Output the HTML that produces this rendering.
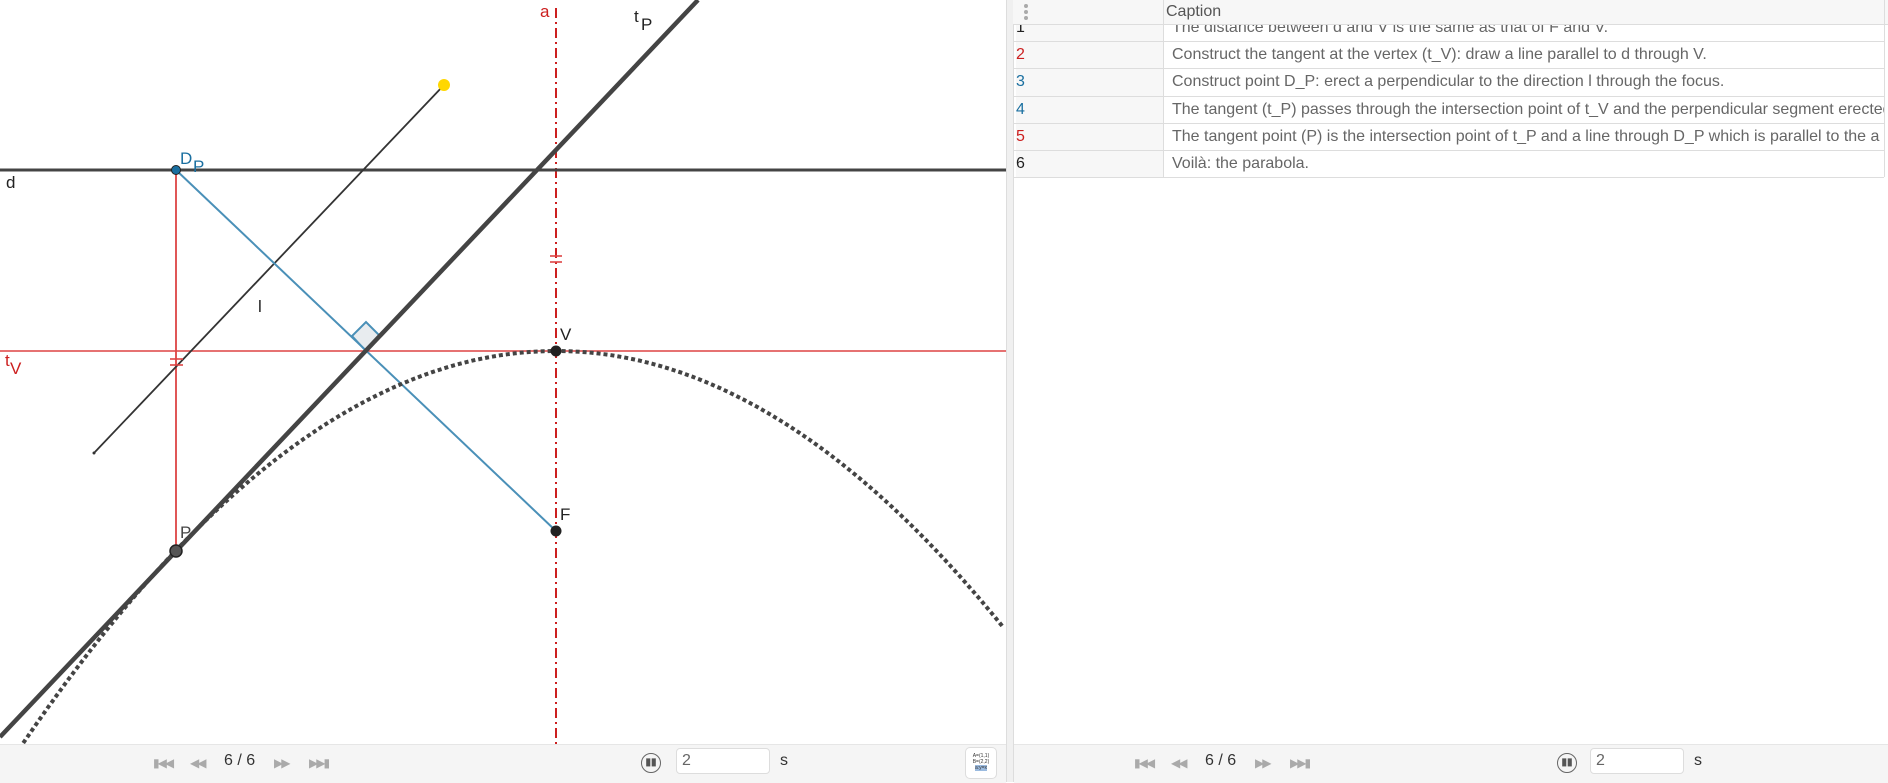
<!DOCTYPE html>
<html><head><meta charset="utf-8"><style>
body{margin:0;width:1888px;height:782px;overflow:hidden;background:#fff;font-family:"Liberation Sans",sans-serif;position:relative}
.abs{position:absolute}
.bar{position:absolute;top:744px;height:38px;background:#f5f5f5;border-top:1px solid #e6e6e6}
.ctl{position:absolute;top:756px;font-size:12px;color:#aaa;letter-spacing:-2px}
.inp{position:absolute;top:748px;width:94px;height:26px;border:1px solid #ddd;border-radius:4px;background:#fff;font-size:16px;color:#666;box-sizing:border-box;padding:3px 5px}
.row{position:absolute;left:1013px;width:871px;border-bottom:1px solid #ddd;overflow:hidden;font-size:16px;color:#666}
.row .n{position:absolute;left:3px;width:148px;height:100%;background:#f7f7f7;border-right:1px solid #ddd;box-sizing:border-box}
.row .n span{position:absolute;left:0}
.row .t{position:absolute;left:159px;white-space:nowrap}
</style></head><body>
<svg class="abs" style="left:0;top:0" width="1006" height="744">
<line x1="556" y1="8" x2="556" y2="744" stroke="#cc1f1f" stroke-width="2" stroke-dasharray="10,4,2,4"/>
<line x1="0" y1="170" x2="1006" y2="170" stroke="#444" stroke-width="3"/>
<line x1="0" y1="351" x2="1006" y2="351" stroke="#d44" stroke-width="1.6"/>
<line x1="176" y1="170" x2="176" y2="551" stroke="#d44" stroke-width="1.8"/>
<line x1="94" y1="453" x2="444" y2="85" stroke="#333" stroke-width="1.8"/>
<circle cx="94" cy="453" r="1.5" fill="#333"/>
<circle cx="444" cy="85" r="6" fill="#ffd700"/>
<polygon points="366,351 352,336 366,322 380,336" fill="#e8ecef" stroke="#4a90b8" stroke-width="2"/>
<line x1="176" y1="170" x2="556" y2="531" stroke="#4a90b8" stroke-width="2"/>
<line x1="0" y1="737" x2="698" y2="0" stroke="#444" stroke-width="4.5"/>
<path id="par" d="" fill="none" stroke="#444" stroke-width="4" stroke-dasharray="4,3"/>
<line x1="550" y1="256" x2="562" y2="256" stroke="#d44" stroke-width="1.6"/><line x1="550" y1="262" x2="562" y2="262" stroke="#d44" stroke-width="1.6"/>
<line x1="170" y1="359" x2="183" y2="359" stroke="#d44" stroke-width="1.6"/><line x1="170" y1="365" x2="183" y2="365" stroke="#d44" stroke-width="1.6"/>
<circle cx="176" cy="170" r="4.5" fill="#1a6fa0" stroke="#222" stroke-width="1"/>
<circle cx="556" cy="351" r="5.5" fill="#222"/>
<circle cx="556" cy="531" r="5.5" fill="#222"/>
<circle cx="176" cy="551" r="6" fill="#555" stroke="#222" stroke-width="1.5"/>
<g font-family="Liberation Sans,sans-serif" font-size="17">
<text x="540" y="17" fill="#cc1f1f">a</text>
<text x="634" y="22" fill="#222">t</text><text x="641" y="30" fill="#222">P</text>
<text x="6" y="188" fill="#222">d</text>
<text x="180" y="164" fill="#1a6fa0">D</text><text x="193" y="172" fill="#1a6fa0">P</text>
<text x="258" y="312" fill="#222">l</text>
<text x="5" y="366" fill="#cc1f1f">t</text><text x="10" y="374" fill="#cc1f1f">V</text>
<text x="560" y="340" fill="#222">V</text>
<text x="560" y="520" fill="#222">F</text>
<text x="180" y="538" fill="#444">P</text>
</g>
</svg>
<script>
var d="";for(var x=0;x<=1006;x+=4){var y=351+(x-556)*(x-556)/724;d+=(x?"L":"M")+x+","+y.toFixed(1);}document.getElementById("par").setAttribute("d",d);
</script>
<div class="abs" style="left:1006px;top:0;width:8px;height:782px;background:#f0f0f0;border-left:1px solid #ddd;border-right:1px solid #ddd;box-sizing:border-box"></div>
<div class="abs" style="left:1013px;top:0;width:875px;height:24px;background:#f7f7f7;border-bottom:1px solid #ddd"></div>
<div class="abs" style="left:1024px;top:4px;width:4px;height:16px;border-left:4px dotted #aaa"></div>
<div class="abs" style="left:1163px;top:0;height:24px;border-left:1px solid #ddd"></div>
<div class="abs" style="left:1166px;top:3px;font-size:16px;color:#555">Caption</div>
<div class="abs" style="left:1884px;top:0;height:177px;border-left:1px solid #ddd"></div>
<div class="row" style="top:25px;height:16px"><div class="n"><span style="top:-6px;color:#222">1</span></div><div class="t" style="top:-6px">The distance between d and V is the same as that of F and V.</div></div>
<div class="row" style="top:42px;height:26px"><div class="n"><span style="top:4px;color:#cc1f1f">2</span></div><div class="t" style="top:4px">Construct the tangent at the vertex (t_V): draw a line parallel to d through V.</div></div>
<div class="row" style="top:69px;height:27px"><div class="n"><span style="top:4px;color:#1a6fa0">3</span></div><div class="t" style="top:4px">Construct point D_P: erect a perpendicular to the direction l through the focus.</div></div>
<div class="row" style="top:97px;height:26px"><div class="n"><span style="top:4px;color:#1a6fa0">4</span></div><div class="t" style="top:4px">The tangent (t_P) passes through the intersection point of t_V and the perpendicular segment erected</div></div>
<div class="row" style="top:124px;height:26px"><div class="n"><span style="top:4px;color:#cc1f1f">5</span></div><div class="t" style="top:4px">The tangent point (P) is the intersection point of t_P and a line through D_P which is parallel to the a</div></div>
<div class="row" style="top:151px;height:26px"><div class="n"><span style="top:4px;color:#222">6</span></div><div class="t" style="top:4px">Voilà: the parabola.</div></div>

<div class="bar" style="left:0;width:1006px"></div>
<div class="bar" style="left:1014px;width:874px"></div>
<div class="ctl" style="left:153px">▮◀◀</div><div class="ctl" style="left:190px">◀◀</div>
<div class="abs" style="left:224px;top:752px;font-size:16px;color:#333">6 / 6</div>
<div class="ctl" style="left:274px">▶▶</div><div class="ctl" style="left:309px">▶▶▮</div>
<div class="abs" style="left:641px;top:753px;width:20px;height:20px;border:1.5px solid #666;border-radius:50%;box-sizing:border-box;font-size:10px;color:#555;text-align:center;line-height:17px;font-weight:bold">▮▮</div>
<div class="inp" style="left:676px">2</div>
<div class="abs" style="left:780px;top:752px;font-size:16px;color:#333">s</div>
<div class="abs" style="left:965px;top:747px;width:32px;height:32px;border:1px solid #ddd;border-radius:5px;background:#fff;font-size:5px;line-height:6px;text-align:center;padding-top:5px;box-sizing:border-box;color:#333">A=(1,1)<br>B=(2,2)<br><span style="background:#9bbbe0">a:y=x</span></div>
<div class="ctl" style="left:1134px">▮◀◀</div><div class="ctl" style="left:1171px">◀◀</div>
<div class="abs" style="left:1205px;top:752px;font-size:16px;color:#333">6 / 6</div>
<div class="ctl" style="left:1255px">▶▶</div><div class="ctl" style="left:1290px">▶▶▮</div>
<div class="abs" style="left:1557px;top:753px;width:20px;height:20px;border:1.5px solid #666;border-radius:50%;box-sizing:border-box;font-size:10px;color:#555;text-align:center;line-height:17px;font-weight:bold">▮▮</div>
<div class="inp" style="left:1590px">2</div>
<div class="abs" style="left:1694px;top:752px;font-size:16px;color:#333">s</div>
</body></html>
